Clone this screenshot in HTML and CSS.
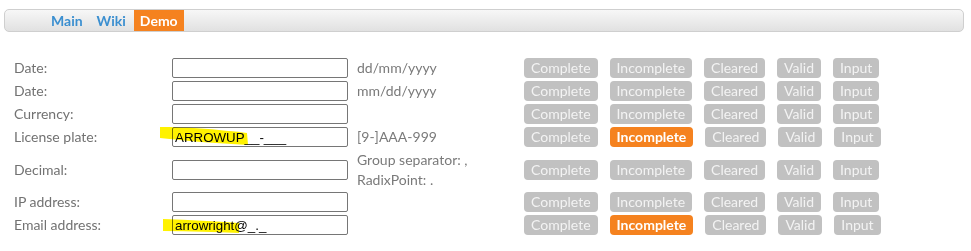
FILE: index.html
```html
<!DOCTYPE html>
<html lang="en">
<head>
<meta charset="utf-8">
<title>Inputmask Demo</title>
<link rel="stylesheet" href="styles.css">
</head>
<body>
<nav class="nav">
  <ul class="nav-list">
    <li><a class="nav-link" href="#">Main</a></li>
    <li><a class="nav-link" href="#">Wiki</a></li>
    <li><a class="nav-link active" href="#">Demo</a></li>
  </ul>
</nav>

<div class="form">
  <div class="label">Date:</div>
  <div class="field"><input class="input" type="text"></div>
  <div class="hint">dd/mm/yyyy</div>
  <div class="btns"><span class="btn">Complete</span><span class="btn">Incomplete</span><span class="btn">Cleared</span><span class="btn">Valid</span><span class="btn">Input</span></div>

  <div class="label">Date:</div>
  <div class="field"><input class="input" type="text"></div>
  <div class="hint">mm/dd/yyyy</div>
  <div class="btns"><span class="btn">Complete</span><span class="btn">Incomplete</span><span class="btn">Cleared</span><span class="btn">Valid</span><span class="btn">Input</span></div>

  <div class="label">Currency:</div>
  <div class="field"><input class="input" type="text"></div>
  <div class="hint"></div>
  <div class="btns"><span class="btn">Complete</span><span class="btn">Incomplete</span><span class="btn">Cleared</span><span class="btn">Valid</span><span class="btn">Input</span></div>

  <div class="label">License plate:</div>
  <div class="field"><input class="input" type="text" value="ARROWUP__-___"></div>
  <div class="hint">[9-]AAA-999</div>
  <div class="btns"><span class="btn">Complete</span><span class="btn on">Incomplete</span><span class="btn">Cleared</span><span class="btn">Valid</span><span class="btn">Input</span></div>

  <div class="label">Decimal:</div>
  <div class="field"><input class="input" type="text"></div>
  <div class="hint hint-multi">Group separator: ,<br>RadixPoint: .</div>
  <div class="btns"><span class="btn">Complete</span><span class="btn">Incomplete</span><span class="btn">Cleared</span><span class="btn">Valid</span><span class="btn">Input</span></div>

  <div class="label">IP address:</div>
  <div class="field"><input class="input" type="text"></div>
  <div class="hint"></div>
  <div class="btns"><span class="btn">Complete</span><span class="btn">Incomplete</span><span class="btn">Cleared</span><span class="btn">Valid</span><span class="btn">Input</span></div>

  <div class="label">Email address:</div>
  <div class="field"><input class="input" type="text" value="arrowright@_._"></div>
  <div class="hint"></div>
  <div class="btns"><span class="btn">Complete</span><span class="btn on">Incomplete</span><span class="btn">Cleared</span><span class="btn">Valid</span><span class="btn">Input</span></div>
</div>

<svg class="marker" width="971" height="251" viewBox="0 0 971 251" aria-hidden="true">
  <path d="M160 127 C 185 127, 215 129, 247 133 L 248 145 C 215 143, 185 141, 160 138 Z" fill="#fff200"/>
  <path d="M163 219 C 190 220, 215 221, 239 223 L 239 233 C 215 232, 190 231, 163 231 Z" fill="#fff200"/>
</svg>
</body>
</html>
```
FILE: styles.css
```css
html, body {
  margin: 0;
  padding: 0;
  background: #ffffff;
}

body {
  position: relative;
  width: 971px;
  height: 251px;
  overflow: hidden;
  font-family: Lato, "Open Sans", sans-serif;
}

.nav {
  margin: 9px 0 0 4px;
  width: 960px;
  height: 23px;
  box-sizing: border-box;
  border: 1px solid #cfcfcf;
  border-radius: 5px;
  background: linear-gradient(#f7f7f7, #e1e1e1);
}

.nav-list {
  list-style: none;
  margin: 0;
  padding: 0 0 0 40px;
  display: flex;
  gap: 2px;
}

.nav-link {
  display: block;
  height: 21px;
  line-height: 21px;
  padding: 0 6px;
  font-size: 14px;
  font-weight: 700;
  color: #3b8fd0;
  text-decoration: none;
}

.nav-link.active {
  background: #f5821f;
  color: #ffffff;
}

.form {
  margin-top: 26px;
  padding-left: 14px;
  display: grid;
  grid-template-columns: 158px 185px 167px auto;
  row-gap: 3px;
  align-items: center;
}

.label {
  font-size: 14px;
  color: #727272;
  line-height: 20px;
}

.field {
  display: flex;
  align-items: center;
}

.input {
  box-sizing: border-box;
  width: 176px;
  height: 20px;
  margin: 0;
  padding: 0 2px;
  border: 1px solid #767676;
  border-radius: 2px;
  background: transparent;
  font-family: "Liberation Sans", Arial, sans-serif;
  font-size: 13.33px;
  color: #000000;
}

.hint {
  font-size: 14px;
  color: #7a7a7a;
  line-height: 20px;
}

.hint-multi {
  line-height: 19.5px;
}

.btns {
  display: flex;
  gap: 12px;
}

.btn {
  height: 20px;
  line-height: 20px;
  padding: 0 7px;
  border-radius: 4px;
  background: #c1c1c1;
  color: #f3f3f3;
  font-size: 14px;
}

.btn.on {
  background: #f5821f;
  color: #ffffff;
  font-weight: 700;
}

.marker {
  position: absolute;
  left: 0;
  top: 0;
  pointer-events: none;
  mix-blend-mode: multiply;
}
```
